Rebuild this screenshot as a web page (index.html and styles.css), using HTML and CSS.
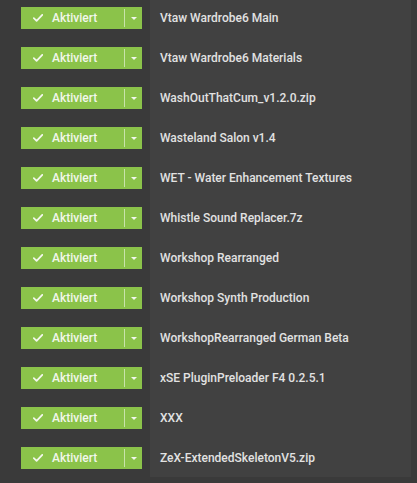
FILE: index.html
```html
<!DOCTYPE html>
<html>
<head>
<meta charset="utf-8">
<link rel="stylesheet" href="styles.css">
</head>
<body>
<div class="wrap">
  <div class="list">
    <div class="row"><div class="cell-btn"><div class="btn"><span class="main"><svg class="check" viewBox="0 0 10 8"><path d="M0.8 4.2 L3.6 6.8 L9.3 0.9"/></svg>Aktiviert</span><span class="sep"></span><span class="drop"><span class="tri"></span></span></div></div><div class="name">Vtaw Wardrobe6 Main</div></div>
    <div class="row"><div class="cell-btn"><div class="btn"><span class="main"><svg class="check" viewBox="0 0 10 8"><path d="M0.8 4.2 L3.6 6.8 L9.3 0.9"/></svg>Aktiviert</span><span class="sep"></span><span class="drop"><span class="tri"></span></span></div></div><div class="name">Vtaw Wardrobe6 Materials</div></div>
    <div class="row"><div class="cell-btn"><div class="btn"><span class="main"><svg class="check" viewBox="0 0 10 8"><path d="M0.8 4.2 L3.6 6.8 L9.3 0.9"/></svg>Aktiviert</span><span class="sep"></span><span class="drop"><span class="tri"></span></span></div></div><div class="name">WashOutThatCum_v1.2.0.zip</div></div>
    <div class="row"><div class="cell-btn"><div class="btn"><span class="main"><svg class="check" viewBox="0 0 10 8"><path d="M0.8 4.2 L3.6 6.8 L9.3 0.9"/></svg>Aktiviert</span><span class="sep"></span><span class="drop"><span class="tri"></span></span></div></div><div class="name">Wasteland Salon v1.4</div></div>
    <div class="row"><div class="cell-btn"><div class="btn"><span class="main"><svg class="check" viewBox="0 0 10 8"><path d="M0.8 4.2 L3.6 6.8 L9.3 0.9"/></svg>Aktiviert</span><span class="sep"></span><span class="drop"><span class="tri"></span></span></div></div><div class="name">WET - Water Enhancement Textures</div></div>
    <div class="row"><div class="cell-btn"><div class="btn"><span class="main"><svg class="check" viewBox="0 0 10 8"><path d="M0.8 4.2 L3.6 6.8 L9.3 0.9"/></svg>Aktiviert</span><span class="sep"></span><span class="drop"><span class="tri"></span></span></div></div><div class="name">Whistle Sound Replacer.7z</div></div>
    <div class="row"><div class="cell-btn"><div class="btn"><span class="main"><svg class="check" viewBox="0 0 10 8"><path d="M0.8 4.2 L3.6 6.8 L9.3 0.9"/></svg>Aktiviert</span><span class="sep"></span><span class="drop"><span class="tri"></span></span></div></div><div class="name">Workshop Rearranged</div></div>
    <div class="row"><div class="cell-btn"><div class="btn"><span class="main"><svg class="check" viewBox="0 0 10 8"><path d="M0.8 4.2 L3.6 6.8 L9.3 0.9"/></svg>Aktiviert</span><span class="sep"></span><span class="drop"><span class="tri"></span></span></div></div><div class="name">Workshop Synth Production</div></div>
    <div class="row"><div class="cell-btn"><div class="btn"><span class="main"><svg class="check" viewBox="0 0 10 8"><path d="M0.8 4.2 L3.6 6.8 L9.3 0.9"/></svg>Aktiviert</span><span class="sep"></span><span class="drop"><span class="tri"></span></span></div></div><div class="name">WorkshopRearranged German Beta</div></div>
    <div class="row"><div class="cell-btn"><div class="btn"><span class="main"><svg class="check" viewBox="0 0 10 8"><path d="M0.8 4.2 L3.6 6.8 L9.3 0.9"/></svg>Aktiviert</span><span class="sep"></span><span class="drop"><span class="tri"></span></span></div></div><div class="name">xSE PluginPreloader F4 0.2.5.1</div></div>
    <div class="row"><div class="cell-btn"><div class="btn"><span class="main"><svg class="check" viewBox="0 0 10 8"><path d="M0.8 4.2 L3.6 6.8 L9.3 0.9"/></svg>Aktiviert</span><span class="sep"></span><span class="drop"><span class="tri"></span></span></div></div><div class="name">XXX</div></div>
    <div class="row"><div class="cell-btn"><div class="btn"><span class="main"><svg class="check" viewBox="0 0 10 8"><path d="M0.8 4.2 L3.6 6.8 L9.3 0.9"/></svg>Aktiviert</span><span class="sep"></span><span class="drop"><span class="tri"></span></span></div></div><div class="name">ZeX-ExtendedSkeletonV5.zip</div></div>
  </div>
</div>
</body>
</html>
```
FILE: styles.css
```css
html, body {
  margin: 0;
  padding: 0;
  background: #3a3a3a;
  width: 417px;
  height: 483px;
  overflow: hidden;
  font-family: Roboto, "Liberation Sans", sans-serif;
}
.wrap {
  height: 477px;
  width: 411px;
  overflow: hidden;
  background: linear-gradient(to right, #3a3a3a 0, #3a3a3a 150px, #414141 150px, #414141 100%);
}
.list {
  display: flex;
  flex-direction: column;
}
.row {
  display: flex;
  height: 40px;
  flex: none;
}
.cell-btn {
  width: 150px;
  flex: none;
  padding: 7px 0 0 21px;
  box-sizing: border-box;
}
.btn {
  display: flex;
  align-items: center;
  width: 121px;
  height: 22px;
  background: #8bc34a;
  color: #f2f7ec;
}
.main {
  display: flex;
  align-items: center;
  width: 103px;
  font-size: 12px;
  font-weight: 500;
}
.check {
  width: 10px;
  height: 8px;
  margin: 0 9px 0 12px;
  fill: none;
  stroke: #f2f7ec;
  stroke-width: 1.8;
  stroke-linecap: round;
  stroke-linejoin: round;
}
.sep {
  width: 1px;
  height: 18px;
  background: #c9e3ab;
  flex: none;
}
.drop {
  flex: 1;
  display: flex;
  justify-content: center;
  align-items: center;
}
.tri {
  width: 0;
  height: 0;
  border-left: 3px solid transparent;
  border-right: 3px solid transparent;
  border-top: 3px solid #f2f7ec;
}
.name {
  padding: 11px 0 0 10px;
  color: #e2e2e2;
  font-size: 12px;
  font-weight: 500;
  white-space: nowrap;
}
```
